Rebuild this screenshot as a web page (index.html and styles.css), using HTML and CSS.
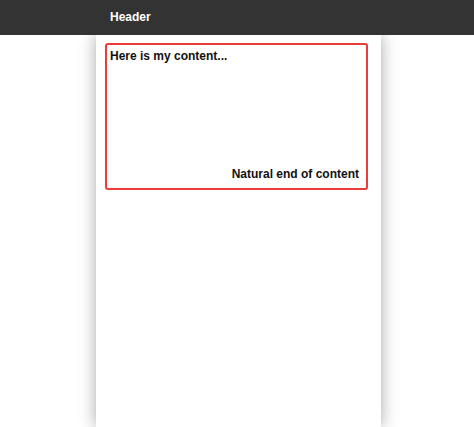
FILE: index.html
```html
<!DOCTYPE html>
<html>
<head>
<meta charset="utf-8">
<link rel="stylesheet" href="styles.css">
</head>
<body>
<header class="header">
  <div class="header-inner">Header</div>
</header>
<main class="page">
  <div class="box">
    <div class="box-top">Here is my content...</div>
    <div class="box-end">Natural end of content</div>
  </div>
</main>
</body>
</html>
```
FILE: styles.css
```css
html, body {
  margin: 0;
  padding: 0;
  height: 100%;
  background: #ffffff;
  font-family: "Liberation Sans", Arial, sans-serif;
  font-size: 12px;
  font-weight: bold;
  color: #111111;
}
.header {
  position: relative;
  z-index: 1;
  height: 35px;
  background: #333333;
  color: #ffffff;
  display: flex;
  align-items: center;
}
.header-inner {
  margin-left: 110px;
  padding-bottom: 2px;
}
.page {
  width: 285px;
  margin-left: 96px;
  height: calc(100% - 35px);
  box-sizing: border-box;
  padding: 8px 13px 0 9px;
  background: #ffffff;
  box-shadow: 0 0 16px rgba(0, 0, 0, 0.35);
}
.box {
  height: 147px;
  box-sizing: border-box;
  border: 2px solid #ec3b3b;
  border-radius: 3px;
  padding: 4px 7px 7px 3px;
  display: flex;
  flex-direction: column;
  justify-content: space-between;
}
.box-end {
  text-align: right;
}
```
